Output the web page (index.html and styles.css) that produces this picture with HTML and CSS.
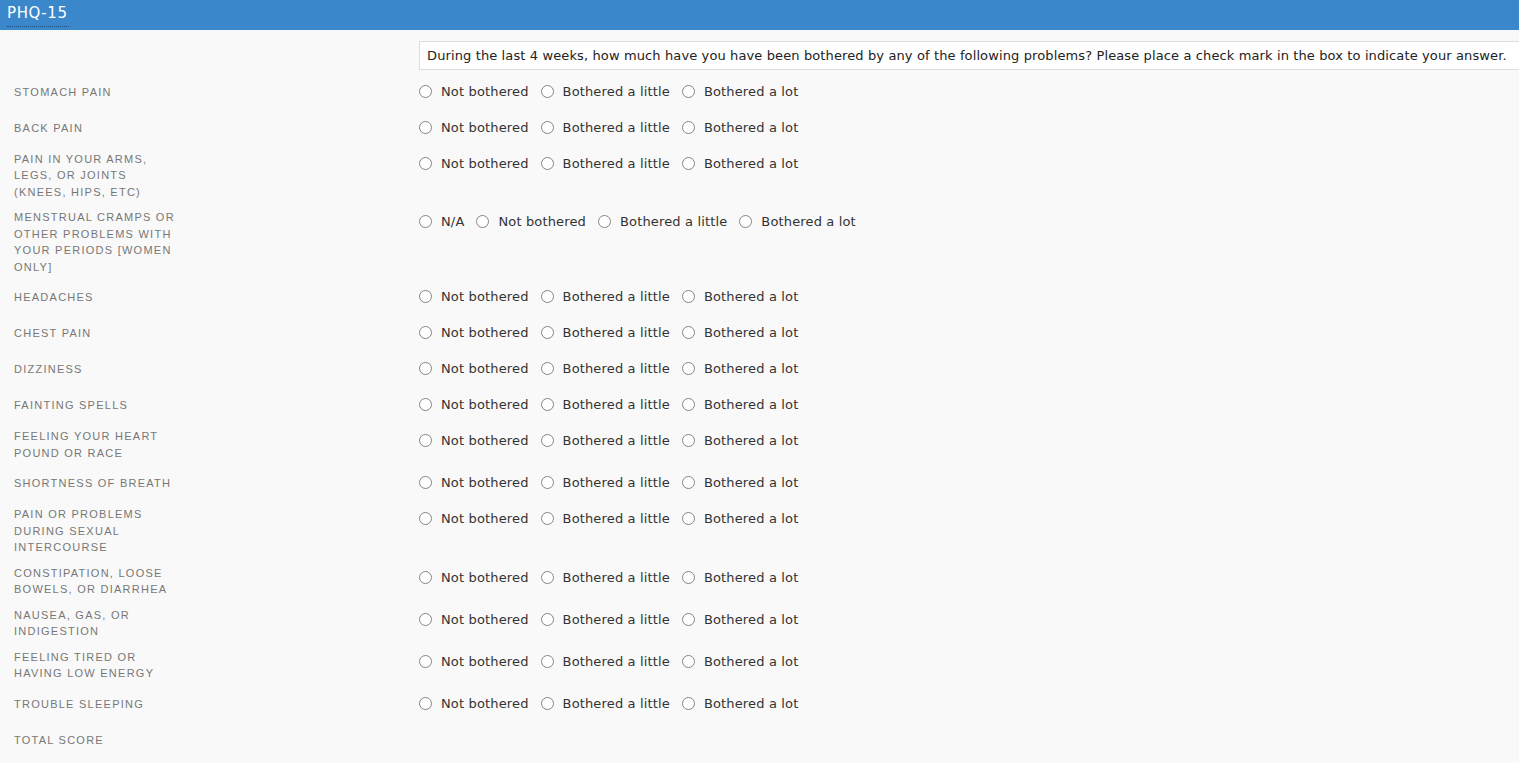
FILE: index.html
```html
<!DOCTYPE html>
<html lang="en">
<head>
<meta charset="utf-8">
<title>PHQ-15</title>
<link rel="stylesheet" href="styles.css">
</head>
<body>
<header class="topbar"><span class="tab">PHQ-15</span></header>
<main class="form">
  <div class="intro">During the last 4 weeks, how much have you have been bothered by any of the following problems? Please place a check mark in the box to indicate your answer.</div>

  <div class="row"><div class="label-col"><div class="label">Stomach pain</div></div>
    <div class="ctrl"><label class="opt"><input type="radio" name="q1">Not bothered</label><label class="opt"><input type="radio" name="q1">Bothered a little</label><label class="opt"><input type="radio" name="q1">Bothered a lot</label></div></div>

  <div class="row"><div class="label-col"><div class="label">Back pain</div></div>
    <div class="ctrl"><label class="opt"><input type="radio" name="q2">Not bothered</label><label class="opt"><input type="radio" name="q2">Bothered a little</label><label class="opt"><input type="radio" name="q2">Bothered a lot</label></div></div>

  <div class="row"><div class="label-col"><div class="label">Pain in your arms, legs, or joints (knees, hips, etc)</div></div>
    <div class="ctrl"><label class="opt"><input type="radio" name="q3">Not bothered</label><label class="opt"><input type="radio" name="q3">Bothered a little</label><label class="opt"><input type="radio" name="q3">Bothered a lot</label></div></div>

  <div class="row"><div class="label-col"><div class="label">Menstrual cramps or other problems with your periods [women only]</div></div>
    <div class="ctrl"><label class="opt"><input type="radio" name="q4">N/A</label><label class="opt"><input type="radio" name="q4">Not bothered</label><label class="opt"><input type="radio" name="q4">Bothered a little</label><label class="opt"><input type="radio" name="q4">Bothered a lot</label></div></div>

  <div class="row"><div class="label-col"><div class="label">Headaches</div></div>
    <div class="ctrl"><label class="opt"><input type="radio" name="q5">Not bothered</label><label class="opt"><input type="radio" name="q5">Bothered a little</label><label class="opt"><input type="radio" name="q5">Bothered a lot</label></div></div>

  <div class="row"><div class="label-col"><div class="label">Chest pain</div></div>
    <div class="ctrl"><label class="opt"><input type="radio" name="q6">Not bothered</label><label class="opt"><input type="radio" name="q6">Bothered a little</label><label class="opt"><input type="radio" name="q6">Bothered a lot</label></div></div>

  <div class="row"><div class="label-col"><div class="label">Dizziness</div></div>
    <div class="ctrl"><label class="opt"><input type="radio" name="q7">Not bothered</label><label class="opt"><input type="radio" name="q7">Bothered a little</label><label class="opt"><input type="radio" name="q7">Bothered a lot</label></div></div>

  <div class="row"><div class="label-col"><div class="label">Fainting spells</div></div>
    <div class="ctrl"><label class="opt"><input type="radio" name="q8">Not bothered</label><label class="opt"><input type="radio" name="q8">Bothered a little</label><label class="opt"><input type="radio" name="q8">Bothered a lot</label></div></div>

  <div class="row"><div class="label-col"><div class="label">Feeling your heart pound or race</div></div>
    <div class="ctrl"><label class="opt"><input type="radio" name="q9">Not bothered</label><label class="opt"><input type="radio" name="q9">Bothered a little</label><label class="opt"><input type="radio" name="q9">Bothered a lot</label></div></div>

  <div class="row"><div class="label-col"><div class="label">Shortness of breath</div></div>
    <div class="ctrl"><label class="opt"><input type="radio" name="q10">Not bothered</label><label class="opt"><input type="radio" name="q10">Bothered a little</label><label class="opt"><input type="radio" name="q10">Bothered a lot</label></div></div>

  <div class="row"><div class="label-col"><div class="label">Pain or problems during sexual intercourse</div></div>
    <div class="ctrl"><label class="opt"><input type="radio" name="q11">Not bothered</label><label class="opt"><input type="radio" name="q11">Bothered a little</label><label class="opt"><input type="radio" name="q11">Bothered a lot</label></div></div>

  <div class="row"><div class="label-col"><div class="label">Constipation, loose bowels, or diarrhea</div></div>
    <div class="ctrl"><label class="opt"><input type="radio" name="q12">Not bothered</label><label class="opt"><input type="radio" name="q12">Bothered a little</label><label class="opt"><input type="radio" name="q12">Bothered a lot</label></div></div>

  <div class="row"><div class="label-col"><div class="label">Nausea, gas, or indigestion</div></div>
    <div class="ctrl"><label class="opt"><input type="radio" name="q13">Not bothered</label><label class="opt"><input type="radio" name="q13">Bothered a little</label><label class="opt"><input type="radio" name="q13">Bothered a lot</label></div></div>

  <div class="row"><div class="label-col"><div class="label">Feeling tired or having low energy</div></div>
    <div class="ctrl"><label class="opt"><input type="radio" name="q14">Not bothered</label><label class="opt"><input type="radio" name="q14">Bothered a little</label><label class="opt"><input type="radio" name="q14">Bothered a lot</label></div></div>

  <div class="row"><div class="label-col"><div class="label">Trouble sleeping</div></div>
    <div class="ctrl"><label class="opt"><input type="radio" name="q15">Not bothered</label><label class="opt"><input type="radio" name="q15">Bothered a little</label><label class="opt"><input type="radio" name="q15">Bothered a lot</label></div></div>

  <div class="row"><div class="label-col"><div class="label">Total score</div></div>
    <div class="ctrl"></div></div>
</main>
</body>
</html>
```

FILE: styles.css
```css
html, body {
  margin: 0;
  padding: 0;
}
body {
  background: #f9f9f9;
  font-family: "DejaVu Sans", Verdana, sans-serif;
  color: #333;
  overflow: hidden;
}
.topbar {
  height: 30px;
  background: #3a87cc;
  padding-left: 7px;
  box-sizing: border-box;
}
.tab {
  display: inline-block;
  color: #fff;
  font-size: 15px;
  line-height: 17px;
  letter-spacing: 0.6px;
  padding: 5px 1px 4px 0;
  border-bottom: 1px dotted #1d4f82;
}
.form {
  padding-top: 11px;
}
.intro {
  margin: 0 -2px 4px 419px;
  background: #fff;
  border: 1px solid #ddd;
  padding: 5px 7px;
  font-size: 13px;
  line-height: 17px;
  letter-spacing: 0.12px;
  color: #222;
  white-space: nowrap;
}
.row {
  display: flex;
  align-items: stretch;
}
.label-col {
  flex: 0 0 419px;
  box-sizing: border-box;
  padding-left: 14px;
  display: flex;
  align-items: center;
}
.label {
  max-width: 166px;
  padding: 4.5px 0;
  font-family: "Liberation Sans", Arial, sans-serif;
  font-size: 11px;
  line-height: 16.5px;
  letter-spacing: 1.25px;
  text-transform: uppercase;
  color: #777;
}
.ctrl {
  display: flex;
  align-items: flex-start;
  padding: 7px 0 9px;
  min-height: 20px;
}
.opt {
  display: inline-flex;
  align-items: center;
  height: 20px;
  font-size: 13px;
  letter-spacing: 0.15px;
  color: #333;
  margin-right: 12px;
  white-space: nowrap;
}
.opt input {
  -webkit-appearance: none;
  appearance: none;
  width: 13px;
  height: 13px;
  margin: 0 9px 0 0;
  border: 1px solid #858585;
  border-radius: 50%;
  background: #fff;
  box-sizing: border-box;
}
```
